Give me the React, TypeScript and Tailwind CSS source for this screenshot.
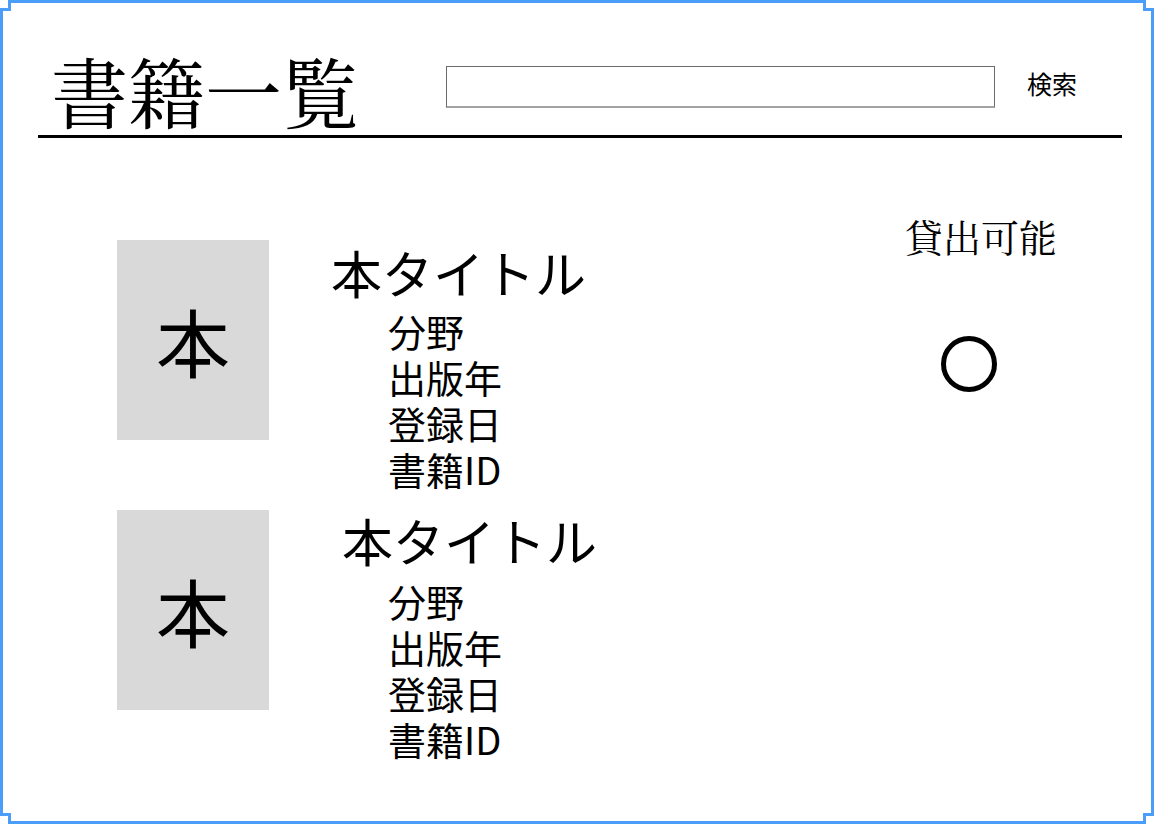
const SANS = "font-['Noto_Sans_CJK_JP','Noto_Sans',sans-serif]";
const SERIF = "font-['Noto_Serif_CJK_JP','Noto_Sans_CJK_JP',serif]";

interface Book {
  id: number;
  titleGap: string;
  titleTop: string;
  coverTop: string;
  fieldsBox: string;
  available?: boolean;
}

const BOOKS: Book[] = [
  { id: 1, titleGap: 'ml-[62px]', titleTop: 'mt-[24px]', coverTop: 'mt-[22px]', fieldsBox: 'mt-[6px] ml-[57px]', available: true },
  { id: 2, titleGap: 'ml-[73px]', titleTop: 'mt-0', coverTop: 'mt-0', fieldsBox: 'mt-[8px] ml-[46px]' },
];

const FIELDS = ['分野', '出版年', '登録日', '書籍ID'];

function Corner({ pos }: { pos: string }) {
  return <div className={`absolute w-[11px] h-[11px] bg-white border-[#4a9df8] ${pos}`} />;
}

function BookRow({ book }: { book: Book }) {
  return (
    <div className="flex items-start">
      <div
        className={`${book.coverTop} ml-[114px] w-[152px] h-[200px] shrink-0 bg-[#d9d9d9] flex items-center justify-center`}
      >
        <span className="text-[74px] leading-none text-black">本</span>
      </div>
      <div className={`${book.titleGap} ${book.titleTop} flex-1`}>
        <div className="text-[51px] leading-[60px] text-black whitespace-nowrap">本タイトル</div>
        <div className={book.fieldsBox}>
          {FIELDS.map((f) => (
            <div key={f} className="text-[38px] leading-[46px] text-black whitespace-nowrap">
              {f}
            </div>
          ))}
        </div>
      </div>
      {book.available && (
        <div className="w-[156px] mr-[90px] shrink-0">
          <div className={`${SERIF} text-[38px] leading-[36px] text-black whitespace-nowrap`}>貸出可能</div>
          <div className="mt-[82px] ml-[36px] w-[56px] h-[56px] rounded-full border-[5px] border-black" />
        </div>
      )}
    </div>
  );
}

export default function App() {
  return (
    <div className={`${SANS} w-[1154px] h-[824px] bg-white`}>
      <div className="relative w-full h-full border-[3px] border-[#4a9df8]">
        <Corner pos="-top-[3px] -left-[3px] border-r-[3px] border-b-[3px]" />
        <Corner pos="-top-[3px] -right-[3px] border-l-[3px] border-b-[3px]" />
        <Corner pos="-bottom-[3px] -left-[3px] border-r-[3px] border-t-[3px]" />
        <Corner pos="-bottom-[3px] -right-[3px] border-l-[3px] border-t-[3px]" />

        {/* header */}
        <div className="ml-[35px] mr-[29px] h-[135px] flex items-start border-b-[3px] border-black">
          <h1 className={`${SERIF} pl-[13px] pt-[49px] text-[77px] leading-[76px] font-normal text-black whitespace-nowrap`}>
            書籍一覧
          </h1>
          <input
            type="text"
            className="ml-[87px] mt-[63px] w-[549px] h-[42px] bg-white border border-[#6b6b6b] border-b-2 border-b-[#a3a3a3] outline-none"
          />
          <button className="ml-[32px] mt-[68px] text-[25px] leading-[24px] text-black">検索</button>
        </div>

        {/* list */}
        <div className="pt-[80px] flex flex-col gap-[18px]">
          {BOOKS.map((b) => (
            <BookRow key={b.id} book={b} />
          ))}
        </div>
      </div>
    </div>
  );
}
